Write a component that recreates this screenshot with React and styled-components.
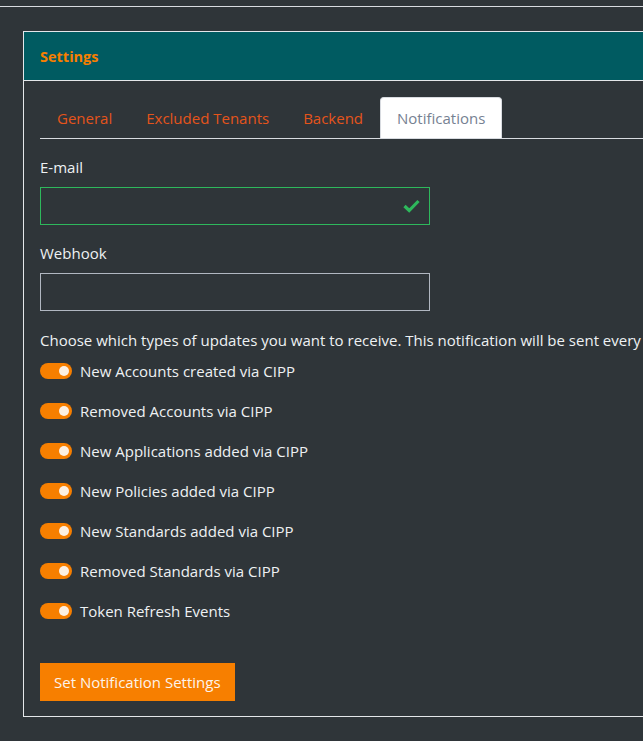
import React, { useState } from "react"
import styled, { createGlobalStyle } from "styled-components"

const GlobalStyle = createGlobalStyle`
	html, body {
		margin: 0;
		padding: 0;
		background: #2f3539;
		overflow: hidden;
	}
	body {
		font-family: "Open Sans", "Noto Sans", sans-serif;
		color: #eef1f3;
	}
`

const colorOrange = "#f77f00"
const colorTab = "#e5541b"

const Page = styled.div`
	width: 643px;
	height: 741px;
	overflow: hidden;
`

const TopBar = styled.div`
	height: 6px;
	border-bottom: 1px solid #d8dbe0;
`

const Content = styled.div`
	padding: 24px 0 0 23px;
`

const Card = styled.div`
	width: 900px;
	border: 1px solid #e4e7ea;
	box-sizing: border-box;
`

const CardHeader = styled.div`
	height: 48px;
	display: flex;
	align-items: center;
	padding: 0 16px;
	background: #005b61;
	border-bottom: 1px solid #e4e7ea;
	color: ${colorOrange};
	font-size: 14.5px;
	font-weight: 700;
`

const CardBody = styled.div`
	padding: 16px 16px 15px 16px;
`

const Tabs = styled.div`
	display: flex;
	border-bottom: 1px solid #d8dbe0;
`

const Tab = styled.div`
	height: 40px;
	display: flex;
	align-items: center;
	padding: 0 16px;
	font-size: 15px;
	color: ${props => (props.active ? "#768192" : colorTab)};
	background: ${props => (props.active ? "#ffffff" : "transparent")};
	border: 1px solid ${props => (props.active ? "#d8dbe0" : "transparent")};
	border-bottom: none;
	border-radius: 4px 4px 0 0;
	cursor: pointer;
`

const Field = styled.div`
	margin-top: 17px;
`

const Label = styled.div`
	font-size: 15px;
	line-height: 22px;
	margin-bottom: 9px;
`

const InputWrap = styled.div`
	position: relative;
	width: 390px;
`

const Input = styled.input`
	display: block;
	width: 100%;
	height: 38px;
	box-sizing: border-box;
	background: transparent;
	border: 1px solid ${props => (props.valid ? "#2eb85c" : "#b1b7c1")};
	border-radius: 0;
	outline: none;
	color: #eef1f3;
	font-size: 14px;
	padding: 0 40px 0 12px;
`

const Check = styled.svg`
	position: absolute;
	right: 10px;
	top: 12px;
`

const Intro = styled.div`
	margin-top: 18px;
	font-size: 15px;
	line-height: 22px;
	white-space: nowrap;
`

const SwitchList = styled.div`
	display: flex;
	flex-direction: column;
	gap: 18px;
	margin-top: 9px;
`

const SwitchRow = styled.label`
	display: flex;
	align-items: center;
	gap: 8px;
	height: 22px;
	font-size: 15px;
	cursor: pointer;
`

const Track = styled.span`
	position: relative;
	width: 32px;
	height: 16px;
	border-radius: 8px;
	background: ${props => (props.on ? colorOrange : "#5c6873")};
	flex-shrink: 0;

	&::after {
		content: "";
		position: absolute;
		top: 3px;
		left: ${props => (props.on ? "19px" : "3px")};
		width: 10px;
		height: 10px;
		border-radius: 50%;
		background: #fdf0e2;
	}
`

const Button = styled.button`
	margin-top: 41px;
	height: 38px;
	padding: 0 14px;
	background: ${colorOrange};
	border: none;
	border-radius: 0;
	color: #fdf3ea;
	font-family: inherit;
	font-size: 15px;
	cursor: pointer;
`

const options = [
	"New Accounts created via CIPP",
	"Removed Accounts via CIPP",
	"New Applications added via CIPP",
	"New Policies added via CIPP",
	"New Standards added via CIPP",
	"Removed Standards via CIPP",
	"Token Refresh Events",
]

export default function App() {
	const [checked, setChecked] = useState(options.map(() => true))

	return (
		<Page>
			<GlobalStyle />
			<TopBar />
			<Content>
				<Card>
					<CardHeader>Settings</CardHeader>
					<CardBody>
						<Tabs>
							<Tab>General</Tab>
							<Tab>Excluded Tenants</Tab>
							<Tab>Backend</Tab>
							<Tab active>Notifications</Tab>
						</Tabs>
						<Field>
							<Label>E-mail</Label>
							<InputWrap>
								<Input valid />
								<Check width="17" height="14" viewBox="0 0 17 14">
									<path d="M1.5 7 L6.2 11.5 L15.5 2" fill="none" stroke="#2eb85c" strokeWidth="3.2" />
								</Check>
							</InputWrap>
						</Field>
						<Field>
							<Label>Webhook</Label>
							<InputWrap>
								<Input />
							</InputWrap>
						</Field>
						<Intro>
							Choose which types of updates you want to receive. This notification will be sent every 15 minutes.
						</Intro>
						<SwitchList>
							{options.map((o, i) => (
								<SwitchRow
									key={o}
									onClick={() => setChecked(c => c.map((v, j) => (j === i ? !v : v)))}
								>
									<Track on={checked[i] ? 1 : 0} />
									{o}
								</SwitchRow>
							))}
						</SwitchList>
						<Button>Set Notification Settings</Button>
					</CardBody>
				</Card>
			</Content>
		</Page>
	)
}
